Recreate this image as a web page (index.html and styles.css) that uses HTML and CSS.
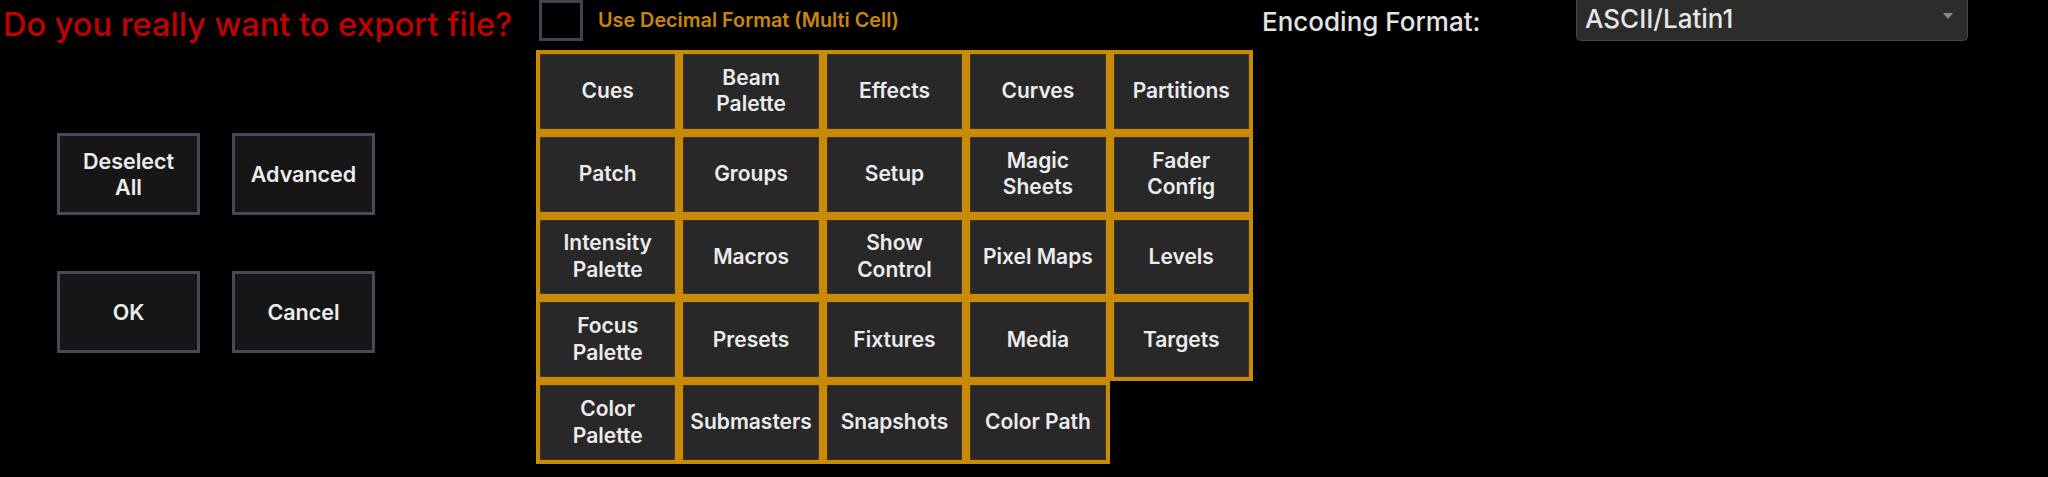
FILE: index.html
```html
<!DOCTYPE html>
<html lang="en">
<head>
<meta charset="utf-8">
<title>Export</title>
<link rel="stylesheet" href="styles.css">
</head>
<body>
<div class="page">
  <section class="left">
    <h1 class="title">Do you really want to export file?</h1>
    <div class="actions">
      <button class="btn">Deselect<br>All</button>
      <button class="btn">Advanced</button>
      <button class="btn">OK</button>
      <button class="btn">Cancel</button>
    </div>
  </section>
  <section class="middle">
    <div class="option">
      <span class="check"></span>
      <span class="option-label">Use Decimal Format (Multi Cell)</span>
    </div>
    <div class="tiles">
      <div class="tile">Cues</div>
      <div class="tile">Beam<br>Palette</div>
      <div class="tile">Effects</div>
      <div class="tile">Curves</div>
      <div class="tile">Partitions</div>
      <div class="tile">Patch</div>
      <div class="tile">Groups</div>
      <div class="tile">Setup</div>
      <div class="tile">Magic<br>Sheets</div>
      <div class="tile">Fader<br>Config</div>
      <div class="tile">Intensity<br>Palette</div>
      <div class="tile">Macros</div>
      <div class="tile">Show<br>Control</div>
      <div class="tile">Pixel Maps</div>
      <div class="tile">Levels</div>
      <div class="tile">Focus<br>Palette</div>
      <div class="tile">Presets</div>
      <div class="tile">Fixtures</div>
      <div class="tile">Media</div>
      <div class="tile">Targets</div>
      <div class="tile">Color<br>Palette</div>
      <div class="tile">Submasters</div>
      <div class="tile">Snapshots</div>
      <div class="tile">Color Path</div>
    </div>
  </section>
  <section class="right">
    <span class="enc-label">Encoding Format:</span>
    <div class="select">
      <span class="select-value">ASCII/Latin1</span>
      <span class="caret"></span>
    </div>
  </section>
</div>
</body>
</html>
```
FILE: styles.css
```css
html, body {
  margin: 0;
  padding: 0;
  background: #000;
}
body {
  font-family: Inter, "Noto Sans", "Liberation Sans", sans-serif;
  color: #e6e6e6;
}
.page {
  display: flex;
  align-items: flex-start;
  width: 2048px;
  height: 477px;
}
.left {
  width: 536px;
  flex: none;
}
.title {
  margin: 0;
  padding: 6px 0 0 3px;
  font-size: 32.5px;
  line-height: 38px;
  font-weight: 500;
  color: #c20000;
  white-space: nowrap;
}
.actions {
  display: grid;
  grid-template-columns: 143px 143px;
  grid-auto-rows: 82px;
  column-gap: 32px;
  row-gap: 56px;
  margin: 89px 0 0 57px;
}
.btn {
  box-sizing: border-box;
  background: #161616;
  border: 3px solid #4b4757;
  color: #ececec;
  font-family: inherit;
  font-size: 21.5px;
  font-weight: 600;
  line-height: 26px;
  padding: 0;
  text-align: center;
}
.middle {
  width: 717px;
  flex: none;
}
.option {
  display: flex;
  align-items: flex-start;
  height: 50px;
  padding-left: 3px;
}
.check {
  box-sizing: border-box;
  width: 44px;
  height: 41px;
  border: 3px solid #45424f;
  background: #000;
  flex: none;
}
.option-label {
  margin: 8px 0 0 15px;
  font-size: 19.8px;
  line-height: 25px;
  font-weight: 600;
  color: #c8870c;
  white-space: nowrap;
}
.tiles {
  display: grid;
  grid-template-columns: repeat(5, 143.4px);
  grid-auto-rows: 82.8px;
}
.tile {
  box-sizing: border-box;
  border: 4px solid #c98a0a;
  background: #282828;
  box-shadow: inset 0 0 0 1px #3d3522;
  display: flex;
  align-items: center;
  justify-content: center;
  text-align: center;
  font-size: 21px;
  font-weight: 600;
  line-height: 26.5px;
  color: #ececec;
  white-space: nowrap;
}
.right {
  display: flex;
  align-items: flex-start;
  padding-left: 9px;
}
.enc-label {
  width: 314px;
  flex: none;
  font-size: 26px;
  font-weight: 500;
  line-height: 32px;
  padding-top: 6px;
  color: #e4e4e4;
  white-space: nowrap;
}
.select {
  box-sizing: border-box;
  width: 392px;
  height: 41px;
  display: flex;
  align-items: flex-start;
  justify-content: space-between;
  background: #2c2c2c;
  border: 1px solid #474747;
  border-top: none;
  border-radius: 0 0 5px 5px;
  padding: 3px 14px 0 8px;
}
.select-value {
  font-size: 26px;
  font-weight: 500;
  color: #e6e6e6;
  line-height: 32px;
}
.caret {
  width: 0;
  height: 0;
  border-left: 5px solid transparent;
  border-right: 5px solid transparent;
  border-top: 6px solid #8a8a8a;
  margin-top: 10px;
}
```
